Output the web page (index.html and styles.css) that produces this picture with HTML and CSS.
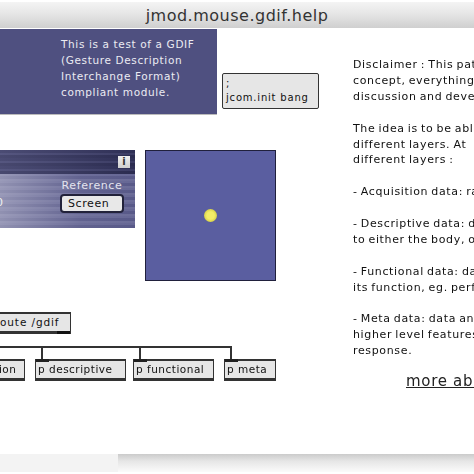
FILE: index.html
```html
<!DOCTYPE html>
<html lang="en">
<head>
    <meta charset="UTF-8">
    <meta name="viewport" content="width=device-width, initial-scale=1.0">
    <title>jmod.mouse.gdif.help</title>
    <link rel="stylesheet" href="styles.css">
</head>

<body>
    <div class="window">
        <div class="titlebar">
            <h1>jmod.mouse.gdif.help</h1>
        </div>

        <div class="patcher">
            <div class="comment-panel">
                <p>This is a test of a GDIF<br>(Gesture Description<br>Interchange Format)<br>compliant module.</p>
            </div>

            <div class="message">;<br>jcom.init bang</div>

            <div class="module">
                <div class="module-head">
                    <span class="info-button">i</span>
                </div>
                <div class="module-body">
                    <span class="module-value">0</span>
                    <div class="reference">
                        <span class="reference-label">Reference</span>
                        <span class="screen-button">Screen</span>
                    </div>
                </div>
            </div>

            <div class="lcd">
                <span class="ball"></span>
            </div>

            <div class="object route">route /gdif</div>

            <div class="wire wire-main"></div>
            <div class="wire wire-descriptive"></div>
            <div class="wire wire-functional"></div>
            <div class="wire wire-meta"></div>

            <div class="object sub sub-acquisition">p acquisition</div>
            <div class="object sub sub-descriptive">p descriptive</div>
            <div class="object sub sub-functional">p functional</div>
            <div class="object sub sub-meta">p meta</div>

            <div class="disclaimer">
                <p>Disclaimer : This patch</p>
                <p>concept, everything</p>
                <p>discussion and development</p>
                <p class="gap">The idea is to be able</p>
                <p>different layers. At</p>
                <p>different layers :</p>
                <p class="gap">- Acquisition data: raw</p>
                <p class="gap">- Descriptive data: data</p>
                <p>to either the body, or</p>
                <p class="gap">- Functional data: data</p>
                <p>its function, eg. perf</p>
                <p class="gap">- Meta data: data and</p>
                <p>higher level features</p>
                <p>response.</p>
            </div>

            <a class="more-link" href="#">more about</a>
        </div>

        <div class="scrollbar">
            <div class="scroll-left"></div>
            <div class="scroll-right"></div>
        </div>
    </div>
</body>
</html>
```

FILE: styles.css
```css
html, body {
    margin: 0;
    padding: 0;
    background-color: #fff;
}

.window {
    width: 474px;
    height: 474px;
    display: flex;
    flex-direction: column;
    overflow: hidden;
    filter: blur(0.35px);
    font-family: "DejaVu Sans", sans-serif;
    color: #111;
}

.titlebar {
    height: 26px;
    margin-top: 2px;
    flex-shrink: 0;
    display: flex;
    justify-content: center;
    align-items: center;
    background: linear-gradient(#f4f4f4, #e6e6e6 45%, #cfcfcf);
}

.titlebar h1 {
    margin: 0;
    font-size: 16px;
    font-weight: normal;
    letter-spacing: 0.5px;
    color: #333;
}

.patcher {
    position: relative;
    flex: 1;
    overflow: hidden;
}

.comment-panel {
    position: absolute;
    left: 0;
    top: 1px;
    width: 217px;
    height: 86px;
    background-color: #4f5080;
    border-bottom: 1px solid #bbb;
    box-sizing: border-box;
    padding: 7px 0 0 61px;
}

.comment-panel p {
    margin: 0;
    font-size: 10.5px;
    line-height: 16px;
    letter-spacing: 0.63px;
    color: #ebebf2;
}

.message {
    position: absolute;
    left: 222px;
    top: 45px;
    width: 97px;
    height: 36px;
    box-sizing: border-box;
    padding: 3px 0 0 3px;
    background-color: #e6e6e6;
    border: 1.5px solid #333;
    border-radius: 2px;
    font-size: 10px;
    line-height: 14px;
    letter-spacing: 0.8px;
}

.module {
    position: absolute;
    left: 0;
    top: 122px;
    width: 135px;
    height: 78px;
    display: flex;
    flex-direction: column;
}

.module-head {
    height: 24px;
    display: flex;
    justify-content: flex-end;
    align-items: center;
    padding-right: 5px;
    background:
        linear-gradient(90deg, rgba(120, 120, 160, 0.35), rgba(30, 30, 60, 0.2)),
        repeating-linear-gradient(#33345c 0 3px, #43446e 3px 5px, #2e2f55 5px 8px);
}

.info-button {
    width: 12px;
    height: 12px;
    text-align: center;
    font-size: 10px;
    font-weight: bold;
    line-height: 12px;
    color: #333;
    background: linear-gradient(#f0f0f0, #cfcfcf);
}

.module-body {
    flex: 1;
    position: relative;
    display: flex;
    justify-content: flex-end;
    padding-right: 11px;
    background:
        linear-gradient(90deg, rgba(190, 190, 210, 0.55), rgba(120, 120, 160, 0.25) 60%, rgba(70, 70, 120, 0.1)),
        repeating-linear-gradient(#6a6b98 0 2px, #5a5b8a 2px 5px, #70719c 5px 7px);
}

.module-value {
    position: absolute;
    left: -4px;
    top: 22px;
    font-size: 11px;
    color: #f0f0f0;
}

.reference {
    display: flex;
    flex-direction: column;
    align-items: center;
    padding-top: 5px;
}

.reference-label {
    font-size: 11px;
    line-height: 14px;
    letter-spacing: 0.6px;
    color: #e4e4ef;
}

.screen-button {
    width: 64px;
    height: 19px;
    box-sizing: border-box;
    margin-top: 1px;
    padding-left: 6px;
    font-size: 11px;
    letter-spacing: 0.6px;
    background-color: #e8e8e8;
    border: 2px solid #22223a;
    border-radius: 4px;
    line-height: 15px;
}

.lcd {
    position: absolute;
    left: 145px;
    top: 122px;
    width: 131px;
    height: 131px;
    box-sizing: border-box;
    background-color: #5a5ea0;
    border: 1px solid #20203c;
}

.ball {
    position: absolute;
    left: 58px;
    top: 58px;
    width: 13px;
    height: 13px;
    border-radius: 50%;
    background: radial-gradient(#f4ee66 40%, #d8d24a 70%, #a8a658);
}

.object {
    position: absolute;
    height: 22px;
    box-sizing: border-box;
    padding-left: 2px;
    font-size: 10.5px;
    line-height: 17px;
    letter-spacing: 0.5px;
    white-space: nowrap;
    background-color: #e6e6e6;
    border: 1px solid #333;
    border-top-width: 2px;
    border-bottom-width: 3px;
}

.object::before {
    content: "";
    position: absolute;
    left: 0;
    top: -2px;
    width: 13px;
    height: 3px;
    background-color: #222;
}

.route {
    left: -16px;
    top: 284px;
    width: 87px;
    padding-left: 10px;
    letter-spacing: 0.9px;
}

.route::before {
    display: none;
}

.route::after {
    content: "";
    position: absolute;
    right: 0;
    bottom: -3px;
    width: 13px;
    height: 3px;
    background-color: #111;
}

.sub {
    top: 331px;
}

.sub-acquisition {
    left: -60px;
    width: 85px;
}

.sub-descriptive {
    left: 35px;
    width: 91px;
}

.sub-functional {
    left: 133px;
    width: 81px;
}

.sub-meta {
    left: 224px;
    width: 52px;
}

.wire {
    position: absolute;
    background-color: #333;
}

.wire-main {
    left: 0;
    top: 318px;
    width: 232px;
    height: 1.5px;
}

.wire-descriptive,
.wire-functional,
.wire-meta {
    top: 318px;
    width: 1.5px;
    height: 14px;
}

.wire-descriptive {
    left: 41px;
}

.wire-functional {
    left: 139px;
}

.wire-meta {
    left: 230px;
}

.disclaimer {
    position: absolute;
    left: 353px;
    top: 29px;
    width: 200px;
    font-size: 11px;
    line-height: 15.9px;
    letter-spacing: 0.65px;
    word-spacing: -1px;
    white-space: nowrap;
    color: #111;
}

.disclaimer p {
    margin: 0;
}

.disclaimer .gap {
    margin-top: 15.9px;
}

.more-link {
    position: absolute;
    left: 406px;
    top: 343px;
    font-size: 15px;
    line-height: 20px;
    letter-spacing: 0.7px;
    white-space: nowrap;
    color: #222;
}

.scrollbar {
    height: 18px;
    margin-bottom: 2px;
    flex-shrink: 0;
    display: flex;
}

.scroll-left {
    width: 118px;
    background-color: #f3f3f3;
}

.scroll-right {
    flex: 1;
    background: linear-gradient(#cbcbcb, #e6e6e6 40%, #fbfbfb);
}
```
